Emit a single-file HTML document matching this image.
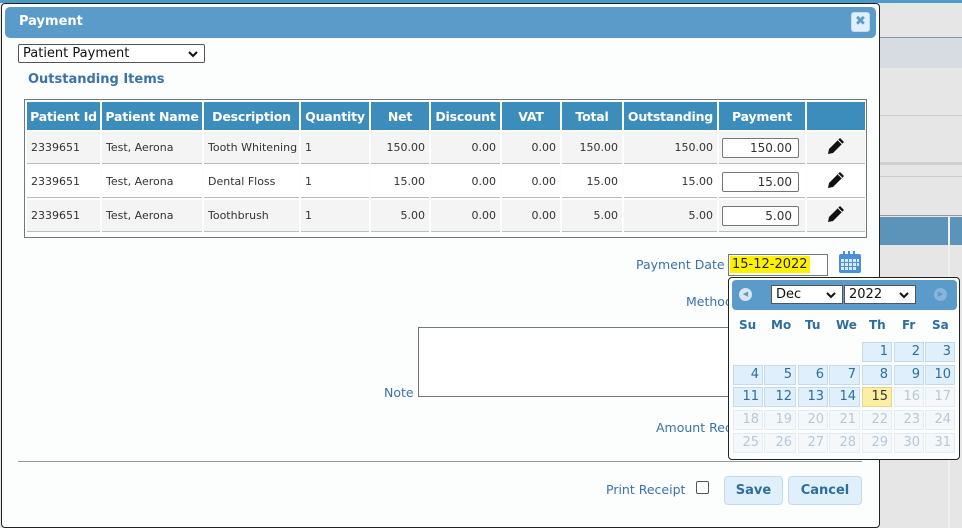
<!DOCTYPE html>
<html><head><meta charset="utf-8"><style>
*{box-sizing:border-box;margin:0;padding:0}
body{width:962px;height:528px;overflow:hidden;position:relative;background:#e6e6e6;font-family:"DejaVu Sans","Liberation Sans",sans-serif;font-size:12px;color:#333}
.a{position:absolute}
.dlg{left:1px;top:3px;width:879px;height:525px;background:#fcfdfd;border:1px solid #222;border-radius:4px}
.title{left:5px;top:7px;width:871px;height:31px;background:#5b9bc9;border-radius:5px;color:#fff;font-weight:bold;font-size:13px;padding:7px 0 0 14px}
table{border-collapse:separate;border-spacing:2px;font-size:11px;table-layout:fixed}
th{background:#3c8dbc;color:#fff;font-weight:bold;font-size:12.5px;height:28px;padding:0;white-space:nowrap;overflow:hidden;letter-spacing:-0.2px}
td{height:32px;padding:0 4px;white-space:nowrap;overflow:hidden;background:#f4f4f4;border-bottom:1px solid #bbb}
tr.w td{background:#fff}
td.r{text-align:right}
.pin{width:77px;height:20px;border:1px solid #777;border-radius:2px;background:#fff;text-align:right;padding:2px 6px 0 0;display:inline-block;font-size:12px}
.lbl{color:#3a73a6;font-size:12.5px}
.d{position:absolute;width:30px;height:20px;background:#dfeffc;border:1px solid #c5dbec;color:#2e6e9e;font-size:13px;text-align:right;padding:1px 3px 0 0}
.dx{background:#f4f8fb;border-color:#e4edf4;color:#b8c8d6}
.btn{background:#dfeffc;border:1px solid #c5dbec;border-radius:4px;color:#2e6e9e;font-weight:bold;font-size:13px;text-align:center;padding-top:6px}
.chev{position:absolute;right:6px;top:6px}
</style></head><body>
<div class="a" style="left:0;top:0;width:962px;height:3px;background:#4a9bc8"></div>
<div class="a" style="left:880px;top:37px;width:82px;height:1px;background:#8a9aaa"></div>
<div class="a" style="left:880px;top:38px;width:82px;height:30px;background:#d7dce3"></div>
<div class="a" style="left:880px;top:115px;width:82px;height:1px;background:#ccc"></div>
<div class="a" style="left:880px;top:162px;width:82px;height:3px;background:#d0d0d0"></div>
<div class="a" style="left:880px;top:176px;width:82px;height:1px;background:#ccc"></div>
<div class="a" style="left:880px;top:215px;width:82px;height:1px;background:#999"></div>
<div class="a" style="left:880px;top:217px;width:82px;height:28px;background:#5b94b8"></div>
<div class="a" style="left:948px;top:217px;width:2px;height:311px;background:#f0f0f0"></div>

<div class="a dlg"></div>
<div class="a title">Payment</div>
<div class="a" style="left:851px;top:12px;width:19px;height:20px;background:#dfeffc;border:1px solid #c5dbec;border-radius:3px;color:#5b9bc9;font-weight:bold;font-size:13px;text-align:center;line-height:17px">✖</div>

<div class="a" style="left:18px;top:44px;width:187px;height:19px;border:1px solid #555;border-radius:2px;background:#fff;font-size:13px;padding:1px 0 0 4px;color:#111">Patient Payment<svg class="chev" width="10" height="7" viewBox="0 0 10 7"><path d="M1 1l4 4 4-4" stroke="#111" stroke-width="2" fill="none"/></svg></div>
<div class="a" style="left:28px;top:72px;color:#3a73a6;font-weight:bold;font-size:13px">Outstanding Items</div>

<div class="a" style="left:24px;top:99px;width:843px;height:139px;border:1px solid #777;overflow:hidden">
<table style="width:841px">
<colgroup><col style="width:73px"><col style="width:100px"><col style="width:95px"><col style="width:68px"><col style="width:58px"><col style="width:69px"><col style="width:58px"><col style="width:60px"><col style="width:93px"><col style="width:86px"><col style="width:58px"></colgroup>
<tr><th>Patient Id</th><th>Patient Name</th><th>Description</th><th>Quantity</th><th>Net</th><th>Discount</th><th>VAT</th><th>Total</th><th>Outstanding</th><th>Payment</th><th></th></tr>
<tr><td>2339651</td><td>Test, Aerona</td><td>Tooth Whitening</td><td>1</td><td class="r">150.00</td><td class="r">0.00</td><td class="r">0.00</td><td class="r">150.00</td><td class="r">150.00</td><td style="padding:0 3px"><span class="pin">150.00</span></td><td style="text-align:center"><svg width="18" height="18" viewBox="0 0 18 18"><path d="M13 1l4 4-11 11-5 1 1-5z" fill="#111"/><path d="M11 3l4 4" stroke="#f4f4f4" stroke-width="1"/></svg></td></tr>
<tr class="w"><td>2339651</td><td>Test, Aerona</td><td>Dental Floss</td><td>1</td><td class="r">15.00</td><td class="r">0.00</td><td class="r">0.00</td><td class="r">15.00</td><td class="r">15.00</td><td style="padding:0 3px"><span class="pin">15.00</span></td><td style="text-align:center"><svg width="18" height="18" viewBox="0 0 18 18"><path d="M13 1l4 4-11 11-5 1 1-5z" fill="#111"/><path d="M11 3l4 4" stroke="#fff" stroke-width="1"/></svg></td></tr>
<tr><td>2339651</td><td>Test, Aerona</td><td>Toothbrush</td><td>1</td><td class="r">5.00</td><td class="r">0.00</td><td class="r">0.00</td><td class="r">5.00</td><td class="r">5.00</td><td style="padding:0 3px"><span class="pin">5.00</span></td><td style="text-align:center"><svg width="18" height="18" viewBox="0 0 18 18"><path d="M13 1l4 4-11 11-5 1 1-5z" fill="#111"/><path d="M11 3l4 4" stroke="#f4f4f4" stroke-width="1"/></svg></td></tr>
</table></div>

<div class="a lbl" style="left:636px;top:257px">Payment Date</div>
<div class="a" style="left:728px;top:254px;width:100px;height:22px;border:1px solid #777;background:#fff"><span style="background:#fff200;font-size:13px;padding:1px 2px;position:absolute;left:1px;top:1px;color:#222">15-12-2022</span></div>
<svg class="a" style="left:838px;top:250px" width="24" height="24" viewBox="0 0 24 24"><rect x="1" y="4" width="22" height="19" rx="2" fill="#4a90d9"/><g fill="#dbe9f8"><rect x="3" y="9" width="3" height="3"/><rect x="7" y="9" width="3" height="3"/><rect x="11" y="9" width="3" height="3"/><rect x="15" y="9" width="3" height="3"/><rect x="19" y="9" width="2" height="3"/><rect x="3" y="13" width="3" height="3"/><rect x="7" y="13" width="3" height="3"/><rect x="11" y="13" width="3" height="3"/><rect x="15" y="13" width="3" height="3"/><rect x="19" y="13" width="2" height="3"/><rect x="3" y="17" width="3" height="3"/><rect x="7" y="17" width="3" height="3"/><rect x="11" y="17" width="3" height="3"/><rect x="15" y="17" width="3" height="3"/></g><g fill="#4a90d9"><rect x="5" y="1" width="2" height="5"/><rect x="10" y="1" width="2" height="5"/><rect x="15" y="1" width="2" height="5"/></g></svg>
<div class="a lbl" style="left:686px;top:294px">Method</div>
<div class="a lbl" style="left:384px;top:385px">Note</div>
<div class="a" style="left:418px;top:327px;width:320px;height:70px;border:1px solid #777;background:#fff"></div>
<div class="a lbl" style="left:656px;top:420px">Amount Received</div>
<div class="a" style="left:18px;top:461px;width:844px;height:1px;background:#999"></div>
<div class="a lbl" style="left:606px;top:482px">Print Receipt</div>
<div class="a" style="left:696px;top:481px;width:13px;height:13px;border:1px solid #555;border-radius:2px;background:#fff"></div>
<div class="a btn" style="left:724px;top:476px;width:59px;height:29px">Save</div>
<div class="a btn" style="left:788px;top:476px;width:74px;height:29px">Cancel</div>

<div class="a" style="left:728px;top:277px;width:232px;height:183px;background:#fcfdfd;border:1px solid #222;border-radius:4px"></div>
<div class="a" style="left:732px;top:280px;width:225px;height:30px;background:#5b9bc9;border-radius:4px"></div>
<div class="a" style="left:739px;top:288px;width:13px;height:13px;border-radius:50%;background:#d9e6f2;color:#5b9bc9;font-size:7px;line-height:13px;text-align:center">◀</div>
<div class="a" style="left:934px;top:288px;width:13px;height:13px;border-radius:50%;background:#86b4da;color:#5b9bc9;font-size:7px;line-height:13px;text-align:center">▶</div>
<div class="a" style="left:771px;top:285px;width:72px;height:19px;background:#fff;border:1px solid #555;font-size:13px;padding:1px 0 0 4px;color:#111">Dec<svg class="chev" width="10" height="7" viewBox="0 0 10 7"><path d="M1 1l4 4 4-4" stroke="#111" stroke-width="2" fill="none"/></svg></div>
<div class="a" style="left:844px;top:285px;width:72px;height:19px;background:#fff;border:1px solid #555;font-size:13px;padding:1px 0 0 4px;color:#111">2022<svg class="chev" width="10" height="7" viewBox="0 0 10 7"><path d="M1 1l4 4 4-4" stroke="#111" stroke-width="2" fill="none"/></svg></div>
<div class="a" style="left:733px;top:318px;width:222px;font-weight:bold;font-size:12px;color:#2e6e9e">
<span class="a" style="left:6px">Su</span><span class="a" style="left:38px">Mo</span><span class="a" style="left:72px">Tu</span><span class="a" style="left:103px">We</span><span class="a" style="left:136px">Th</span><span class="a" style="left:169px">Fr</span><span class="a" style="left:199px">Sa</span></div>
<div class="d" style="left:862px;top:342px">1</div><div class="d" style="left:894px;top:342px">2</div><div class="d" style="left:925px;top:342px">3</div>
<div class="d" style="left:733px;top:365px">4</div><div class="d" style="left:764px;top:365px;width:32px">5</div><div class="d" style="left:798px;top:365px">6</div><div class="d" style="left:829px;top:365px;width:31px">7</div><div class="d" style="left:862px;top:365px">8</div><div class="d" style="left:894px;top:365px">9</div><div class="d" style="left:925px;top:365px">10</div>
<div class="d" style="left:733px;top:387px">11</div><div class="d" style="left:764px;top:387px;width:32px">12</div><div class="d" style="left:798px;top:387px">13</div><div class="d" style="left:829px;top:387px;width:31px">14</div><div class="d" style="left:862px;top:387px;background:#fcefa1;border-color:#e6d68a;color:#363636">15</div><div class="d dx" style="left:894px;top:387px">16</div><div class="d dx" style="left:925px;top:387px">17</div>
<div class="d dx" style="left:733px;top:410px">18</div><div class="d dx" style="left:764px;top:410px;width:32px">19</div><div class="d dx" style="left:798px;top:410px">20</div><div class="d dx" style="left:829px;top:410px;width:31px">21</div><div class="d dx" style="left:862px;top:410px">22</div><div class="d dx" style="left:894px;top:410px">23</div><div class="d dx" style="left:925px;top:410px">24</div>
<div class="d dx" style="left:733px;top:433px">25</div><div class="d dx" style="left:764px;top:433px;width:32px">26</div><div class="d dx" style="left:798px;top:433px">27</div><div class="d dx" style="left:829px;top:433px;width:31px">28</div><div class="d dx" style="left:862px;top:433px">29</div><div class="d dx" style="left:894px;top:433px">30</div><div class="d dx" style="left:925px;top:433px">31</div>
</body></html>
